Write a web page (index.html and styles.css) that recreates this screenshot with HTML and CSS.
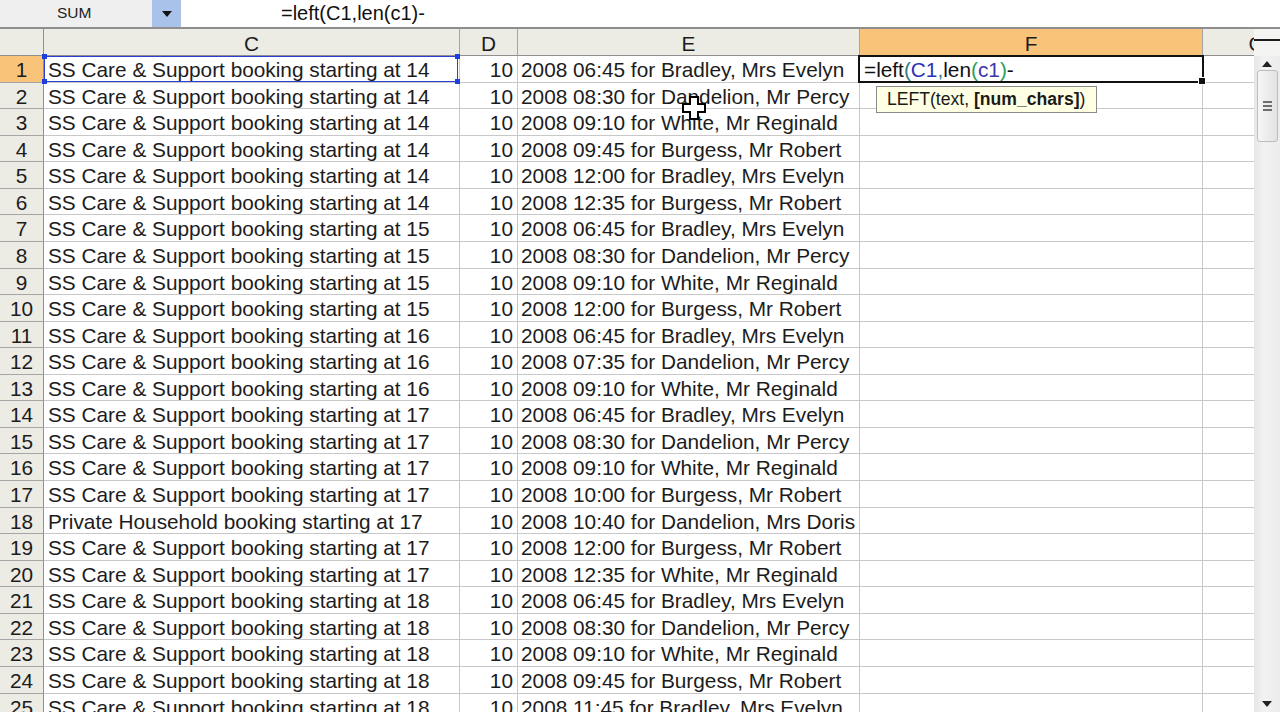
FILE: index.html
```html
<!DOCTYPE html>
<html>
<head>
<meta charset="utf-8">
<link rel="stylesheet" href="styles.css">
</head>
<body>
<div class="formula-bar">
  <div class="name-box">SUM</div>
  <div class="name-drop"><svg width="10" height="6" viewBox="0 0 10 6"><polygon points="0,0 10,0 5,6" fill="#111"/></svg></div>
  <div class="formula-input">=left(C1,len(c1)-</div>
</div>
<div class="main">
  <div class="sheet-wrap">
    <div class="sheet">
      <div class="corner"></div><div class="colhdr">C</div><div class="colhdr">D</div><div class="colhdr">E</div><div class="colhdr sel">F</div><div class="colhdr">G</div>

      <div class="rowhdr sel">1</div><div class="c">SS Care &amp; Support booking starting at 14</div><div class="d">10</div><div class="e">2008 06:45 for Bradley, Mrs Evelyn</div><div class="f"><span class="k">=left</span><span class="p1">(</span><span class="r1">C1</span><span class="p1">,</span><span class="k">len</span><span class="p2">(</span><span class="r2">c1</span><span class="p2">)</span><span class="k">-</span></div><div class="g"></div>
      <div class="rowhdr">2</div><div class="c">SS Care &amp; Support booking starting at 14</div><div class="d">10</div><div class="e">2008 08:30 for Dandelion, Mr Percy</div><div class="f"></div><div class="g"></div>
      <div class="rowhdr">3</div><div class="c">SS Care &amp; Support booking starting at 14</div><div class="d">10</div><div class="e">2008 09:10 for White, Mr Reginald</div><div class="f"></div><div class="g"></div>
      <div class="rowhdr">4</div><div class="c">SS Care &amp; Support booking starting at 14</div><div class="d">10</div><div class="e">2008 09:45 for Burgess, Mr Robert</div><div class="f"></div><div class="g"></div>
      <div class="rowhdr">5</div><div class="c">SS Care &amp; Support booking starting at 14</div><div class="d">10</div><div class="e">2008 12:00 for Bradley, Mrs Evelyn</div><div class="f"></div><div class="g"></div>
      <div class="rowhdr">6</div><div class="c">SS Care &amp; Support booking starting at 14</div><div class="d">10</div><div class="e">2008 12:35 for Burgess, Mr Robert</div><div class="f"></div><div class="g"></div>
      <div class="rowhdr">7</div><div class="c">SS Care &amp; Support booking starting at 15</div><div class="d">10</div><div class="e">2008 06:45 for Bradley, Mrs Evelyn</div><div class="f"></div><div class="g"></div>
      <div class="rowhdr">8</div><div class="c">SS Care &amp; Support booking starting at 15</div><div class="d">10</div><div class="e">2008 08:30 for Dandelion, Mr Percy</div><div class="f"></div><div class="g"></div>
      <div class="rowhdr">9</div><div class="c">SS Care &amp; Support booking starting at 15</div><div class="d">10</div><div class="e">2008 09:10 for White, Mr Reginald</div><div class="f"></div><div class="g"></div>
      <div class="rowhdr">10</div><div class="c">SS Care &amp; Support booking starting at 15</div><div class="d">10</div><div class="e">2008 12:00 for Burgess, Mr Robert</div><div class="f"></div><div class="g"></div>
      <div class="rowhdr">11</div><div class="c">SS Care &amp; Support booking starting at 16</div><div class="d">10</div><div class="e">2008 06:45 for Bradley, Mrs Evelyn</div><div class="f"></div><div class="g"></div>
      <div class="rowhdr">12</div><div class="c">SS Care &amp; Support booking starting at 16</div><div class="d">10</div><div class="e">2008 07:35 for Dandelion, Mr Percy</div><div class="f"></div><div class="g"></div>
      <div class="rowhdr">13</div><div class="c">SS Care &amp; Support booking starting at 16</div><div class="d">10</div><div class="e">2008 09:10 for White, Mr Reginald</div><div class="f"></div><div class="g"></div>
      <div class="rowhdr">14</div><div class="c">SS Care &amp; Support booking starting at 17</div><div class="d">10</div><div class="e">2008 06:45 for Bradley, Mrs Evelyn</div><div class="f"></div><div class="g"></div>
      <div class="rowhdr">15</div><div class="c">SS Care &amp; Support booking starting at 17</div><div class="d">10</div><div class="e">2008 08:30 for Dandelion, Mr Percy</div><div class="f"></div><div class="g"></div>
      <div class="rowhdr">16</div><div class="c">SS Care &amp; Support booking starting at 17</div><div class="d">10</div><div class="e">2008 09:10 for White, Mr Reginald</div><div class="f"></div><div class="g"></div>
      <div class="rowhdr">17</div><div class="c">SS Care &amp; Support booking starting at 17</div><div class="d">10</div><div class="e">2008 10:00 for Burgess, Mr Robert</div><div class="f"></div><div class="g"></div>
      <div class="rowhdr">18</div><div class="c">Private Household booking starting at 17</div><div class="d">10</div><div class="e">2008 10:40 for Dandelion, Mrs Doris</div><div class="f"></div><div class="g"></div>
      <div class="rowhdr">19</div><div class="c">SS Care &amp; Support booking starting at 17</div><div class="d">10</div><div class="e">2008 12:00 for Burgess, Mr Robert</div><div class="f"></div><div class="g"></div>
      <div class="rowhdr">20</div><div class="c">SS Care &amp; Support booking starting at 17</div><div class="d">10</div><div class="e">2008 12:35 for White, Mr Reginald</div><div class="f"></div><div class="g"></div>
      <div class="rowhdr">21</div><div class="c">SS Care &amp; Support booking starting at 18</div><div class="d">10</div><div class="e">2008 06:45 for Bradley, Mrs Evelyn</div><div class="f"></div><div class="g"></div>
      <div class="rowhdr">22</div><div class="c">SS Care &amp; Support booking starting at 18</div><div class="d">10</div><div class="e">2008 08:30 for Dandelion, Mr Percy</div><div class="f"></div><div class="g"></div>
      <div class="rowhdr">23</div><div class="c">SS Care &amp; Support booking starting at 18</div><div class="d">10</div><div class="e">2008 09:10 for White, Mr Reginald</div><div class="f"></div><div class="g"></div>
      <div class="rowhdr">24</div><div class="c">SS Care &amp; Support booking starting at 18</div><div class="d">10</div><div class="e">2008 09:45 for Burgess, Mr Robert</div><div class="f"></div><div class="g"></div>
      <div class="rowhdr">25</div><div class="c">SS Care &amp; Support booking starting at 18</div><div class="d">10</div><div class="e">2008 11:45 for Bradley, Mrs Evelyn</div><div class="f"></div><div class="g"></div>
    </div>

    <div class="ref-box">
      <span class="hd tl"></span><span class="hd bl"></span><span class="hd tr"></span><span class="hd br"></span>
    </div>
    <div class="active-box"><span class="fill-handle"></span></div>
    <div class="tooltip">LEFT(text, <b>[num_chars]</b>)</div>
    <svg class="cursor" width="24" height="24" viewBox="0 0 24 24"><polygon points="8,1 16,1 16,8 23,8 23,16 16,16 16,23 8,23 8,16 1,16 1,8 8,8" fill="#fff" stroke="#000" stroke-width="2"/></svg>
  </div>
  <div class="vscroll">
    <div class="split"><span class="split-line"></span></div>
    <div class="track">
      <div class="arrow-btn"><svg width="10" height="6" viewBox="0 0 10 6"><polygon points="5,0 10,6 0,6" fill="#222"/></svg></div>
      <div class="thumb"><span class="grip"></span><span class="grip"></span><span class="grip"></span></div>
      <div class="track-space"></div>
      <div class="arrow-btn"><svg width="10" height="6" viewBox="0 0 10 6"><polygon points="0,0 10,0 5,6" fill="#222"/></svg></div>
    </div>
  </div>
</div>
</body>
</html>
```

FILE: styles.css
```css
html, body {
  margin: 0;
  padding: 0;
}
body {
  width: 1280px;
  height: 712px;
  overflow: hidden;
  background: #fff;
  font-family: "Liberation Sans", Arial, sans-serif;
  color: #1c1c1c;
}

/* formula bar */
.formula-bar {
  display: flex;
  height: 27px;
  border-bottom: 2px solid #8e8e8e;
}
.name-box {
  width: 152px;
  box-sizing: border-box;
  background: #efefef;
  padding-left: 57px;
  font-size: 15.5px;
  line-height: 26px;
  color: #222;
}
.name-drop {
  width: 29px;
  background: #a8c2ea;
  display: flex;
  align-items: center;
  justify-content: center;
}
.formula-input {
  flex: 1;
  padding-left: 100px;
  font-size: 20px;
  line-height: 26px;
  color: #111;
}

/* main area */
.main {
  display: flex;
  height: 683px;
}
.sheet-wrap {
  width: 1254px;
  position: relative;
  overflow: hidden;
}
.sheet {
  display: grid;
  grid-template-columns: 44px 416px 58px 342px 343px 108px;
  grid-template-rows: 27px;
  grid-auto-rows: 26.57px;
  font-size: 20.8px;
}
.sheet > div {
  box-sizing: border-box;
  border-right: 1px solid #c8c8c8;
  border-bottom: 1px solid #c8c8c8;
  white-space: nowrap;
  overflow: hidden;
  line-height: 25px;
  padding-top: 1px;
}
.corner, .colhdr, .rowhdr {
  background: #ecebe4;
}
.corner {
  border-right-color: #8f8f8f !important;
  border-bottom-color: #8f8f8f !important;
}
.colhdr {
  text-align: center;
  border-right-color: #a5a5a5 !important;
  border-bottom-color: #8f8f8f !important;
  padding-top: 2px !important;
}
.rowhdr {
  text-align: center;
  border-right-color: #8f8f8f !important;
  border-bottom-color: #a5a5a5 !important;
}
.colhdr.sel, .rowhdr.sel {
  background: #f9c47a;
}
.colhdr.sel {
  border-bottom-color: #6b6b6b !important;
}
.c { padding-left: 4px; }
.d { padding-right: 4px; text-align: right; }
.e { padding-left: 3px; }
.f { padding-left: 4px; }

.k { color: #111; }
.p1 { color: #2f7c86; }
.r1 { color: #2b32b8; }
.p2 { color: #2b9d58; }
.r2 { color: #3f35a8; }

/* C1 reference box */
.ref-box {
  position: absolute;
  left: 44px;
  top: 27px;
  width: 414px;
  height: 26px;
  box-sizing: border-box;
  border: 1px solid #2a3fd4;
}
.hd {
  position: absolute;
  width: 5px;
  height: 5px;
  background: #1f3ee0;
}
.hd.tl { left: -3px; top: -3px; }
.hd.bl { left: -3px; bottom: -3px; }
.hd.tr { right: -3px; top: -3px; }
.hd.br { right: -3px; bottom: -3px; }

/* active cell F1 */
.active-box {
  position: absolute;
  left: 858px;
  top: 26px;
  width: 346px;
  height: 28px;
  box-sizing: border-box;
  border: 2px solid #111;
}
.fill-handle {
  position: absolute;
  right: -4px;
  bottom: -4px;
  width: 6px;
  height: 6px;
  background: #111;
  border: 1px solid #fff;
}

/* tooltip */
.tooltip {
  position: absolute;
  left: 876px;
  top: 57px;
  width: 221px;
  height: 27px;
  box-sizing: border-box;
  background: #ffffe3;
  border: 1px solid #8a8a8a;
  font-size: 17.6px;
  line-height: 25px;
  padding-left: 10px;
  color: #1a1a1a;
  white-space: nowrap;
}
.tooltip b { font-weight: bold; }

.cursor {
  position: absolute;
  left: 682px;
  top: 67px;
}

/* vertical scrollbar */
.vscroll {
  width: 26px;
  display: flex;
  flex-direction: column;
  background: #eeeeee;
}
.split {
  height: 27px;
  background: #f4f4f2;
  position: relative;
}
.split-line {
  position: absolute;
  left: 0;
  right: 0;
  top: 10px;
  height: 2px;
  background: #1c1c1c;
}
.track {
  flex: 1;
  display: flex;
  flex-direction: column;
  align-items: center;
  background: linear-gradient(to right, #e6e6e6, #f2f2f2 40%, #ececec);
}
.arrow-btn {
  height: 16px;
  width: 100%;
  display: flex;
  align-items: center;
  justify-content: center;
}
.thumb {
  margin-top: -2px;
  width: 21px;
  height: 72px;
  box-sizing: border-box;
  border: 1px solid #bdbdbd;
  border-radius: 3px;
  background: linear-gradient(to right, #f6f6f6, #e2e2e2);
  display: flex;
  flex-direction: column;
  align-items: center;
  justify-content: center;
  gap: 2px;
}
.grip {
  width: 9px;
  height: 2px;
  background: #6e6e6e;
}
.track-space {
  flex: 1;
}
```
